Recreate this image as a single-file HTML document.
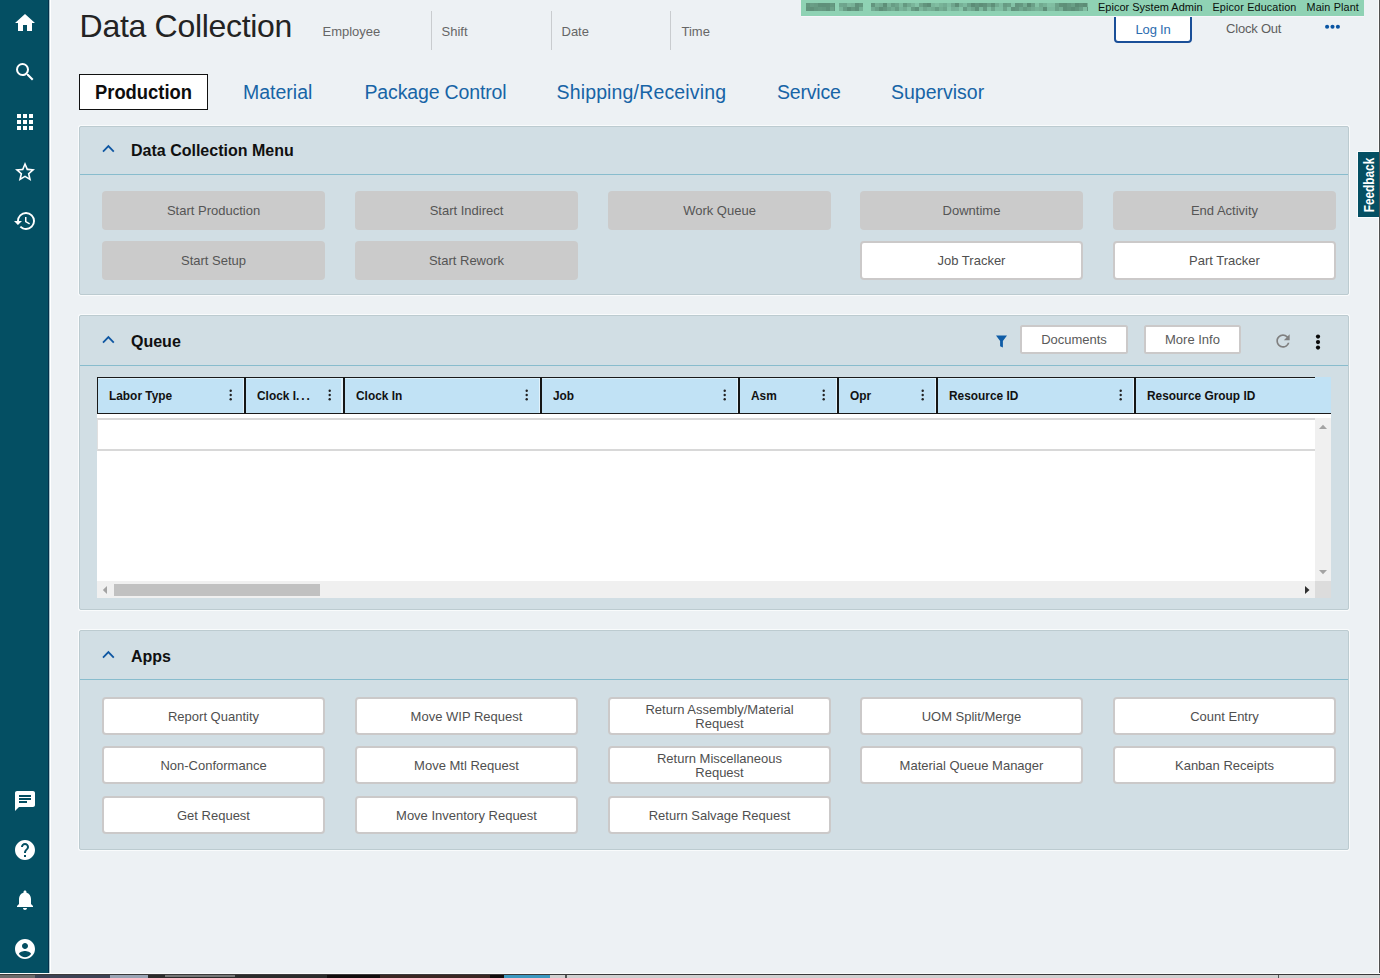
<!DOCTYPE html>
<html><head><meta charset="utf-8">
<style>
*{box-sizing:border-box;margin:0;padding:0}
html,body{width:1380px;height:978px;overflow:hidden;background:#edf1f4;font-family:"Liberation Sans",sans-serif;position:relative}
.a{position:absolute;white-space:nowrap;line-height:1}
#side{position:absolute;left:0;top:0;width:48px;height:973px;background:#044f63}
#sideline{position:absolute;left:48px;top:0;width:3px;height:973px;background:linear-gradient(90deg,#03314a 0,#03314a 1px,#a9c4cc 1px,#a9c4cc 2px,#fff 2px)}
.ico{position:absolute;left:13px;width:24px;height:24px;fill:#fff}
.hdrlbl{font-size:13px;color:#666}
.div{position:absolute;top:11px;width:1px;height:39px;background:#c9cccf}
.tab{font-size:19.5px;color:#1764a6}
.panel{position:absolute;left:79px;width:1270px;background:#d1dee4;border:1px solid #bccbd0;border-radius:2px;box-shadow:0 0 0 1px #f9fbfc}
.phl{position:absolute;left:0;width:100%;height:1px;background:#88bccd}
.ptitle{font-size:16px;font-weight:bold;color:#101010}
.chev{position:absolute;width:14px;height:9px}
.btn{position:absolute;width:223px;height:39px;border-radius:4px;font-size:13px;color:#555;display:flex;align-items:center;justify-content:center;text-align:center;line-height:13.5px;padding-top:1px}
.dis{background:#cbcbcb}
.wht{background:#fff;border:2px solid #cbc9c9;border-radius:4px;color:#4f4f4f}
</style></head><body>
<div id="side"></div><div id="sideline"></div>
<svg class="ico" style="top:11px" viewBox="0 0 24 24"><path d="M10 20v-6h4v6h5v-8h3L12 3 2 12h3v8z"/></svg>
<svg class="ico" style="top:60px" viewBox="0 0 24 24"><path d="M15.5 14h-.79l-.28-.27A6.471 6.471 0 0016 9.5 6.5 6.5 0 109.5 16c1.61 0 3.090-.59 4.23-1.57l.27.28v.79l5 4.99L20.49 19l-4.99-5zm-6 0C7.01 14 5 11.99 5 9.5S7.01 5 9.5 5 14 7.01 14 9.5 11.99 14 9.5 14z"/></svg>
<svg class="ico" style="top:110px" viewBox="0 0 24 24"><path d="M4 8h4V4H4v4zm6 12h4v-4h-4v4zm-6 0h4v-4H4v4zm0-6h4v-4H4v4zm6 0h4v-4h-4v4zm6-10v4h4V4h-4zm-6 4h4V4h-4v4zm6 6h4v-4h-4v4zm0 6h4v-4h-4v4z"/></svg>
<svg class="ico" style="top:159.5px" viewBox="0 0 24 24"><path d="M22 9.24l-7.19-.62L12 2 9.19 8.63 2 9.24l5.46 4.73L5.82 21 12 17.27 18.18 21l-1.63-7.03L22 9.24zM12 15.4l-3.76 2.27 1-4.28-3.32-2.88 4.38-.38L12 6.1l1.71 4.04 4.38.38-3.32 2.88 1 4.28L12 15.4z"/></svg>
<svg class="ico" style="top:209px" viewBox="0 0 24 24"><path d="M13 3a9 9 0 00-9 9H1l3.89 3.89.07.14L9 12H6c0-3.87 3.13-7 7-7s7 3.13 7 7-3.13 7-7 7c-1.93 0-3.68-.79-4.94-2.06l-1.42 1.42A8.954 8.954 0 0013 21a9 9 0 000-18zm-1 5v5l4.28 2.54.72-1.21-3.5-2.08V8H12z"/></svg>
<svg class="ico" style="top:789px" viewBox="0 0 24 24"><path d="M20 2H4c-1.1 0-1.99.9-1.99 2L2 22l4-4h14c1.1 0 2-.9 2-2V4c0-1.1-.9-2-2-2zM6 9h12v2H6V9zm8 5H6v-2h8v2zm4-6H6V6h12v2z"/></svg>
<svg class="ico" style="top:838px" viewBox="0 0 24 24"><path d="M12 2C6.48 2 2 6.48 2 12s4.48 10 10 10 10-4.48 10-10S17.52 2 12 2zm1 17h-2v-2h2v2zm2.07-7.75l-.9.92C13.45 12.9 13 13.5 13 15h-2v-.5c0-1.1.45-2.1 1.17-2.83l1.24-1.26c.37-.36.59-.86.59-1.41 0-1.1-.9-2-2-2s-2 .9-2 2H8c0-2.21 1.79-4 4-4s4 1.79 4 4c0 .88-.36 1.680-.93 2.25z"/></svg>
<svg class="ico" style="top:888px" viewBox="0 0 24 24"><path d="M12 22c1.1 0 2-.9 2-2h-4c0 1.1.89 2 2 2zm6-6v-5c0-3.07-1.64-5.64-4.5-6.32V4c0-.83-.67-1.5-1.5-1.5s-1.5.67-1.5 1.5v.68C7.63 5.36 6 7.92 6 11v5l-2 2v1h16v-1l-2-2z"/></svg>
<svg class="ico" style="top:937px" viewBox="0 0 24 24"><path d="M12 2C6.48 2 2 6.48 2 12s4.48 10 10 10 10-4.48 10-10S17.52 2 12 2zm0 4c1.66 0 3 1.34 3 3s-1.34 3-3 3-3-1.34-3-3 1.34-3 3-3zm0 14.2c-2.5 0-4.71-1.28-6-3.22.03-1.99 4-3.08 6-3.08 1.99 0 5.97 1.09 6 3.08-1.29 1.94-3.5 3.22-6 3.22z"/></svg>

<div class="a" style="left:79.6px;top:10.2px;font-size:32px;color:#232323;letter-spacing:-0.3px">Data Collection</div>
<div class="a hdrlbl" style="left:322.5px;top:25px">Employee</div>
<div class="div" style="left:431px"></div>
<div class="a hdrlbl" style="left:441.5px;top:25px">Shift</div>
<div class="div" style="left:551px"></div>
<div class="a hdrlbl" style="left:561.5px;top:25px">Date</div>
<div class="div" style="left:670px"></div>
<div class="a hdrlbl" style="left:681.5px;top:25px">Time</div>
<div style="position:absolute;left:1114px;top:8px;width:78px;height:35px;border:2px solid #1a4f98;border-radius:4px;background:#fff"></div>
<div class="a" style="left:1135.6px;top:22.7px;font-size:13px;color:#2c6cb0;letter-spacing:-0.2px">Log In</div>
<div class="a" style="left:1226px;top:22px;font-size:13px;color:#5e5e5e;letter-spacing:-0.2px">Clock Out</div>
<svg style="position:absolute;left:1324px;top:22px" width="18" height="8" viewBox="0 0 18 8"><circle cx="3.1" cy="4.7" r="2.05" fill="#0a55a3"/><circle cx="8.5" cy="4.7" r="2.05" fill="#0a55a3"/><circle cx="13.9" cy="4.7" r="2.05" fill="#0a55a3"/></svg>
<div style="position:absolute;left:801px;top:0;width:563px;height:16px;background:#8fd2b4;border-bottom:0px"></div>
<div style="position:absolute;left:801px;top:16px;width:563px;height:1px;background:#f8f5fb"></div>
<div class="a" style="left:1098px;top:2px;font-size:11px;color:#0a0f0c">Epicor System Admin</div>
<div class="a" style="left:1212.5px;top:2px;font-size:10.8px;color:#0a0f0c;letter-spacing:0.15px">Epicor Education</div>
<div class="a" style="left:1306.5px;top:2px;font-size:10.8px;color:#0a0f0c;letter-spacing:0.15px">Main Plant</div>

<div style="position:absolute;left:79px;top:74px;width:129px;height:36px;border:1.5px solid #111;background:#fff"></div>
<div class="a" style="left:95.4px;top:82.3px;font-size:20.5px;font-weight:bold;color:#0d0d0d;transform:scaleX(0.896);transform-origin:0 0">Production</div>
<div class="a tab" style="left:243px;top:82.7px">Material</div>
<div class="a tab" style="left:364.5px;top:82.7px;letter-spacing:-0.15px">Package Control</div>
<div class="a tab" style="left:556.5px;top:82.7px;letter-spacing:0.15px">Shipping/Receiving</div>
<div class="a tab" style="left:777px;top:82.7px;letter-spacing:-0.2px">Service</div>
<div class="a tab" style="left:891px;top:82.7px">Supervisor</div>

<div class="panel" style="top:126px;height:169px"><div class="phl" style="top:47px"></div><svg class="chev" style="left:22px;top:17px" viewBox="0 0 14 9"><path d="M1 7.6L6.4 2.1l5.4 5.5" fill="none" stroke="#0f57a2" stroke-width="1.8"/></svg><div class="a ptitle" style="left:51px;top:16px">Data Collection Menu</div><div class="btn dis" style="left:22px;top:64px;height:39px">Start Production</div><div class="btn dis" style="left:275px;top:64px;height:39px">Start Indirect</div><div class="btn dis" style="left:528px;top:64px;height:39px">Work Queue</div><div class="btn dis" style="left:780px;top:64px;height:39px">Downtime</div><div class="btn dis" style="left:1033px;top:64px;height:39px">End Activity</div><div class="btn dis" style="left:22px;top:114px;height:39px">Start Setup</div><div class="btn dis" style="left:275px;top:114px;height:39px">Start Rework</div><div class="btn wht" style="left:780px;top:113.5px;height:39px">Job Tracker</div><div class="btn wht" style="left:1033px;top:113.5px;height:39px">Part Tracker</div></div>
<div class="panel" style="top:315px;height:295px"><div class="phl" style="top:49px"></div><svg class="chev" style="left:22px;top:19px" viewBox="0 0 14 9"><path d="M1 7.6L6.4 2.1l5.4 5.5" fill="none" stroke="#0f57a2" stroke-width="1.8"/></svg><div class="a ptitle" style="left:51px;top:18px">Queue</div><svg style="position:absolute;left:916px;top:18.5px" width="11" height="13" viewBox="0 0 11 13"><path d="M0 0.5h11L6.9 6V12.5L4.1 11.3V6z" fill="#0f5ca6"/></svg><div class="wht" style="position:absolute;left:940px;top:9px;width:108px;height:29px;border:2px solid #cbc9c9;border-radius:2.5px;font-size:13px;color:#5a5a5a;display:flex;align-items:center;justify-content:center">Documents</div><div class="wht" style="position:absolute;left:1064px;top:9px;width:97px;height:29px;border:2px solid #cbc9c9;border-radius:2.5px;font-size:13px;color:#5a5a5a;display:flex;align-items:center;justify-content:center">More Info</div><svg style="position:absolute;left:1193px;top:14.8px" width="20" height="20" viewBox="0 0 24 24"><path d="M17.65 6.35A7.958 7.958 0 0012 4c-4.42 0-7.99 3.58-7.99 8s3.57 8 7.99 8c3.73 0 6.84-2.55 7.73-6h-2.08A5.99 5.99 0 0112 18c-3.31 0-6-2.69-6-6s2.69-6 6-6c1.66 0 3.14.69 4.22 1.78L13 11h7V4l-2.35 2.35z" fill="#808080"/></svg><svg style="position:absolute;left:1235px;top:18px" width="6" height="17" viewBox="0 0 6 17"><circle cx="3" cy="2.6" r="2.1" fill="#0a0a0a"/><circle cx="3" cy="8.1" r="2.1" fill="#0a0a0a"/><circle cx="3" cy="13.6" r="2.1" fill="#0a0a0a"/></svg><div style="position:absolute;left:17px;top:61px;width:1234px;height:221px;background:#fff;overflow:hidden"><div style="position:absolute;left:0;top:0;width:1234px;height:37px;background:#c1e2f5"></div><div style="position:absolute;left:0;top:0;width:1218px;height:1px;background:#1a1a1a"></div><div style="position:absolute;left:0;top:1px;width:1218px;height:1px;background:#dcf0fa"></div><div style="position:absolute;left:0;top:36px;width:1234px;height:1px;background:#1a1a1a"></div><div style="position:absolute;left:0px;top:0;width:1px;height:37px;background:#1a1a1a"></div><div class="a" style="left:12px;top:12px;font-size:13.5px;font-weight:bold;color:#111;transform:scaleX(0.88);transform-origin:0 0">Labor Type</div><svg style="position:absolute;left:131px;top:12px" width="4" height="12" viewBox="0 0 4 12"><circle cx="2.7" cy="1.7" r="1.2" fill="#222"/><circle cx="2.7" cy="6" r="1.2" fill="#222"/><circle cx="2.7" cy="10.3" r="1.2" fill="#222"/></svg><div style="position:absolute;left:145.5px;top:1px;width:1.5px;height:35px;background:#e2f2fb"></div><div style="position:absolute;left:147.0px;top:0;width:2px;height:37px;background:#151515"></div><div class="a" style="left:160px;top:12px;font-size:13.5px;font-weight:bold;color:#111;transform:scaleX(0.88);transform-origin:0 0">Clock I<span style="letter-spacing:2.2px">..</span>.</div><svg style="position:absolute;left:229.5px;top:12px" width="4" height="12" viewBox="0 0 4 12"><circle cx="2.7" cy="1.7" r="1.2" fill="#222"/><circle cx="2.7" cy="6" r="1.2" fill="#222"/><circle cx="2.7" cy="10.3" r="1.2" fill="#222"/></svg><div style="position:absolute;left:244.0px;top:1px;width:1.5px;height:35px;background:#e2f2fb"></div><div style="position:absolute;left:245.5px;top:0;width:2px;height:37px;background:#151515"></div><div class="a" style="left:258.5px;top:12px;font-size:13.5px;font-weight:bold;color:#111;transform:scaleX(0.88);transform-origin:0 0">Clock In</div><svg style="position:absolute;left:427px;top:12px" width="4" height="12" viewBox="0 0 4 12"><circle cx="2.7" cy="1.7" r="1.2" fill="#222"/><circle cx="2.7" cy="6" r="1.2" fill="#222"/><circle cx="2.7" cy="10.3" r="1.2" fill="#222"/></svg><div style="position:absolute;left:441.5px;top:1px;width:1.5px;height:35px;background:#e2f2fb"></div><div style="position:absolute;left:443.0px;top:0;width:2px;height:37px;background:#151515"></div><div class="a" style="left:456px;top:12px;font-size:13.5px;font-weight:bold;color:#111;transform:scaleX(0.88);transform-origin:0 0">Job</div><svg style="position:absolute;left:625px;top:12px" width="4" height="12" viewBox="0 0 4 12"><circle cx="2.7" cy="1.7" r="1.2" fill="#222"/><circle cx="2.7" cy="6" r="1.2" fill="#222"/><circle cx="2.7" cy="10.3" r="1.2" fill="#222"/></svg><div style="position:absolute;left:639.5px;top:1px;width:1.5px;height:35px;background:#e2f2fb"></div><div style="position:absolute;left:641.0px;top:0;width:2px;height:37px;background:#151515"></div><div class="a" style="left:654px;top:12px;font-size:13.5px;font-weight:bold;color:#111;transform:scaleX(0.88);transform-origin:0 0">Asm</div><svg style="position:absolute;left:724px;top:12px" width="4" height="12" viewBox="0 0 4 12"><circle cx="2.7" cy="1.7" r="1.2" fill="#222"/><circle cx="2.7" cy="6" r="1.2" fill="#222"/><circle cx="2.7" cy="10.3" r="1.2" fill="#222"/></svg><div style="position:absolute;left:738.5px;top:1px;width:1.5px;height:35px;background:#e2f2fb"></div><div style="position:absolute;left:740.0px;top:0;width:2px;height:37px;background:#151515"></div><div class="a" style="left:753px;top:12px;font-size:13.5px;font-weight:bold;color:#111;transform:scaleX(0.88);transform-origin:0 0">Opr</div><svg style="position:absolute;left:823px;top:12px" width="4" height="12" viewBox="0 0 4 12"><circle cx="2.7" cy="1.7" r="1.2" fill="#222"/><circle cx="2.7" cy="6" r="1.2" fill="#222"/><circle cx="2.7" cy="10.3" r="1.2" fill="#222"/></svg><div style="position:absolute;left:837.5px;top:1px;width:1.5px;height:35px;background:#e2f2fb"></div><div style="position:absolute;left:839.0px;top:0;width:2px;height:37px;background:#151515"></div><div class="a" style="left:852px;top:12px;font-size:13.5px;font-weight:bold;color:#111;transform:scaleX(0.88);transform-origin:0 0">Resource ID</div><svg style="position:absolute;left:1021px;top:12px" width="4" height="12" viewBox="0 0 4 12"><circle cx="2.7" cy="1.7" r="1.2" fill="#222"/><circle cx="2.7" cy="6" r="1.2" fill="#222"/><circle cx="2.7" cy="10.3" r="1.2" fill="#222"/></svg><div style="position:absolute;left:1035.5px;top:1px;width:1.5px;height:35px;background:#e2f2fb"></div><div style="position:absolute;left:1037.0px;top:0;width:2px;height:37px;background:#151515"></div><div class="a" style="left:1050px;top:12px;font-size:13.5px;font-weight:bold;color:#111;transform:scaleX(0.88);transform-origin:0 0">Resource Group ID</div><div style="position:absolute;left:0;top:41px;width:1218px;height:33px;border-top:2px solid #d8d8d8;border-bottom:2px solid #d8d8d8;border-left:1px solid #e0e0e0"></div><div style="position:absolute;left:1218px;top:41px;width:16px;height:163px;background:#f0f0f0"></div><svg style="position:absolute;left:1222px;top:47px" width="8" height="5" viewBox="0 0 8 5"><path d="M0 5L4 0.8 8 5z" fill="#a3a3a3"/></svg><svg style="position:absolute;left:1222px;top:193px" width="8" height="5" viewBox="0 0 8 5"><path d="M0 0L4 4.2 8 0z" fill="#a3a3a3"/></svg><div style="position:absolute;left:0;top:204px;width:1218px;height:17px;background:#f0f0f0"></div><div style="position:absolute;left:17px;top:206.5px;width:206px;height:12.5px;background:#c1c1c1"></div><svg style="position:absolute;left:5px;top:208.5px" width="5" height="8" viewBox="0 0 5 8"><path d="M5 0L0.8 4 5 8z" fill="#a3a3a3"/></svg><svg style="position:absolute;left:1208px;top:209px" width="5" height="8" viewBox="0 0 5 8"><path d="M0 0L4.5 4 0 8z" fill="#303030"/></svg><div style="position:absolute;left:1218px;top:204px;width:16px;height:18px;background:#dcdcdc"></div></div></div>
<div class="panel" style="top:630px;height:220px"><div class="phl" style="top:48px"></div><svg class="chev" style="left:22px;top:19px" viewBox="0 0 14 9"><path d="M1 7.6L6.4 2.1l5.4 5.5" fill="none" stroke="#0f57a2" stroke-width="1.8"/></svg><div class="a ptitle" style="left:51px;top:18px">Apps</div><div class="btn wht" style="left:22px;top:66px;height:38px">Report Quantity</div><div class="btn wht" style="left:275px;top:66px;height:38px">Move WIP Request</div><div class="btn wht" style="left:528px;top:66px;height:38px">Return Assembly/Material<br>Request</div><div class="btn wht" style="left:780px;top:66px;height:38px">UOM Split/Merge</div><div class="btn wht" style="left:1033px;top:66px;height:38px">Count Entry</div><div class="btn wht" style="left:22px;top:115px;height:38px">Non-Conformance</div><div class="btn wht" style="left:275px;top:115px;height:38px">Move Mtl Request</div><div class="btn wht" style="left:528px;top:115px;height:38px">Return Miscellaneous<br>Request</div><div class="btn wht" style="left:780px;top:115px;height:38px">Material Queue Manager</div><div class="btn wht" style="left:1033px;top:115px;height:38px">Kanban Receipts</div><div class="btn wht" style="left:22px;top:165px;height:38px">Get Request</div><div class="btn wht" style="left:275px;top:165px;height:38px">Move Inventory Request</div><div class="btn wht" style="left:528px;top:165px;height:38px">Return Salvage Request</div></div>

<svg style="position:absolute;left:801px;top:0" width="300" height="15" viewBox="0 0 300 15"><rect x="5" y="3" width="4" height="4" fill="#64977f"/><rect x="5" y="7" width="4" height="4" fill="#61937c"/><rect x="9" y="3" width="4" height="4" fill="#699e86"/><rect x="9" y="7" width="4" height="4" fill="#60917a"/><rect x="13" y="3" width="4" height="4" fill="#679b83"/><rect x="13" y="7" width="4" height="4" fill="#649880"/><rect x="17" y="3" width="4" height="4" fill="#5f917a"/><rect x="17" y="7" width="4" height="4" fill="#679b83"/><rect x="21" y="3" width="4" height="4" fill="#5f907a"/><rect x="21" y="7" width="4" height="4" fill="#659981"/><rect x="25" y="3" width="4" height="4" fill="#60917a"/><rect x="25" y="7" width="4" height="4" fill="#60917b"/><rect x="29" y="3" width="4" height="4" fill="#659981"/><rect x="29" y="7" width="4" height="4" fill="#6ca289"/><rect x="33" y="3" width="1" height="4" fill="#60927b"/><rect x="33" y="7" width="1" height="4" fill="#62947d"/><rect x="38" y="3" width="4" height="4" fill="#6fa78e"/><rect x="38" y="7" width="4" height="4" fill="#7ab59a"/><rect x="42" y="3" width="4" height="4" fill="#6ea48c"/><rect x="42" y="7" width="4" height="4" fill="#689d85"/><rect x="46" y="3" width="4" height="4" fill="#7bb69b"/><rect x="46" y="7" width="4" height="4" fill="#5d8d77"/><rect x="50" y="3" width="4" height="4" fill="#77b197"/><rect x="50" y="7" width="4" height="4" fill="#659880"/><rect x="54" y="3" width="4" height="4" fill="#60917b"/><rect x="54" y="7" width="4" height="4" fill="#5f907a"/><rect x="58" y="3" width="4" height="4" fill="#659981"/><rect x="58" y="7" width="4" height="4" fill="#75af95"/><rect x="70" y="3" width="4" height="4" fill="#63957e"/><rect x="70" y="7" width="4" height="4" fill="#73ac93"/><rect x="74" y="3" width="4" height="4" fill="#76b095"/><rect x="74" y="7" width="4" height="4" fill="#6ba088"/><rect x="78" y="3" width="4" height="4" fill="#72aa91"/><rect x="78" y="7" width="4" height="4" fill="#5e8f78"/><rect x="82" y="3" width="4" height="4" fill="#5e8f78"/><rect x="82" y="7" width="4" height="4" fill="#649780"/><rect x="86" y="3" width="4" height="4" fill="#78b298"/><rect x="86" y="7" width="4" height="4" fill="#6da48b"/><rect x="90" y="3" width="4" height="4" fill="#689d85"/><rect x="90" y="7" width="4" height="4" fill="#74ad93"/><rect x="94" y="3" width="4" height="4" fill="#6ea58c"/><rect x="94" y="7" width="4" height="4" fill="#689c84"/><rect x="98" y="3" width="4" height="4" fill="#7cb99d"/><rect x="98" y="7" width="4" height="4" fill="#78b399"/><rect x="102" y="3" width="4" height="4" fill="#659981"/><rect x="102" y="7" width="4" height="4" fill="#73ac92"/><rect x="106" y="3" width="4" height="4" fill="#71a990"/><rect x="106" y="7" width="4" height="4" fill="#80bda1"/><rect x="110" y="3" width="4" height="4" fill="#7ab59a"/><rect x="110" y="7" width="4" height="4" fill="#679c84"/><rect x="114" y="3" width="4" height="4" fill="#84c3a7"/><rect x="114" y="7" width="4" height="4" fill="#60927b"/><rect x="118" y="3" width="4" height="4" fill="#6da38a"/><rect x="118" y="7" width="4" height="4" fill="#7bb69b"/><rect x="122" y="3" width="4" height="4" fill="#62947d"/><rect x="122" y="7" width="4" height="4" fill="#70a78e"/><rect x="126" y="3" width="4" height="4" fill="#5d8d77"/><rect x="126" y="7" width="4" height="4" fill="#77b197"/><rect x="130" y="3" width="4" height="4" fill="#7bb79c"/><rect x="130" y="7" width="4" height="4" fill="#73ac92"/><rect x="134" y="3" width="4" height="4" fill="#80bda1"/><rect x="134" y="7" width="4" height="4" fill="#689d85"/><rect x="138" y="3" width="4" height="4" fill="#78b398"/><rect x="138" y="7" width="4" height="4" fill="#74ad93"/><rect x="142" y="3" width="4" height="4" fill="#73ac93"/><rect x="142" y="7" width="4" height="4" fill="#6ea58c"/><rect x="146" y="3" width="4" height="4" fill="#7ebba0"/><rect x="146" y="7" width="4" height="4" fill="#83c1a5"/><rect x="150" y="3" width="4" height="4" fill="#6fa68d"/><rect x="150" y="7" width="4" height="4" fill="#77b197"/><rect x="154" y="3" width="4" height="4" fill="#5e8f78"/><rect x="154" y="7" width="4" height="4" fill="#78b399"/><rect x="158" y="3" width="4" height="4" fill="#76b096"/><rect x="158" y="7" width="4" height="4" fill="#85c4a7"/><rect x="162" y="3" width="4" height="4" fill="#7dba9f"/><rect x="162" y="7" width="4" height="4" fill="#679b84"/><rect x="166" y="3" width="4" height="4" fill="#6ba189"/><rect x="166" y="7" width="4" height="4" fill="#77b197"/><rect x="170" y="3" width="4" height="4" fill="#5c8c76"/><rect x="170" y="7" width="4" height="4" fill="#6fa68d"/><rect x="174" y="3" width="4" height="4" fill="#62957e"/><rect x="174" y="7" width="4" height="4" fill="#60927b"/><rect x="178" y="3" width="4" height="4" fill="#5e8e78"/><rect x="178" y="7" width="4" height="4" fill="#7bb79c"/><rect x="182" y="3" width="4" height="4" fill="#61927c"/><rect x="182" y="7" width="4" height="4" fill="#669982"/><rect x="186" y="3" width="4" height="4" fill="#6ca189"/><rect x="186" y="7" width="4" height="4" fill="#80bda1"/><rect x="190" y="3" width="4" height="4" fill="#5f9079"/><rect x="190" y="7" width="4" height="4" fill="#6ea58c"/><rect x="194" y="3" width="4" height="4" fill="#72ab91"/><rect x="194" y="7" width="4" height="4" fill="#80bea2"/><rect x="198" y="3" width="4" height="4" fill="#7dba9f"/><rect x="198" y="7" width="4" height="4" fill="#7fbda1"/><rect x="202" y="3" width="4" height="4" fill="#679b83"/><rect x="202" y="7" width="4" height="4" fill="#6da38a"/><rect x="206" y="3" width="4" height="4" fill="#6aa087"/><rect x="206" y="7" width="4" height="4" fill="#80bea2"/><rect x="210" y="3" width="4" height="4" fill="#83c2a6"/><rect x="210" y="7" width="4" height="4" fill="#62947d"/><rect x="214" y="3" width="4" height="4" fill="#63957e"/><rect x="214" y="7" width="4" height="4" fill="#659881"/><rect x="218" y="3" width="4" height="4" fill="#659881"/><rect x="218" y="7" width="4" height="4" fill="#6fa78e"/><rect x="222" y="3" width="4" height="4" fill="#74ad93"/><rect x="222" y="7" width="4" height="4" fill="#669a82"/><rect x="226" y="3" width="4" height="4" fill="#5b8b75"/><rect x="226" y="7" width="4" height="4" fill="#6da38a"/><rect x="230" y="3" width="4" height="4" fill="#6ba088"/><rect x="230" y="7" width="4" height="4" fill="#73ab92"/><rect x="234" y="3" width="4" height="4" fill="#83c2a5"/><rect x="234" y="7" width="4" height="4" fill="#78b398"/><rect x="238" y="3" width="4" height="4" fill="#71a98f"/><rect x="238" y="7" width="4" height="4" fill="#75ae94"/><rect x="242" y="3" width="4" height="4" fill="#77b297"/><rect x="242" y="7" width="4" height="4" fill="#5e8e78"/><rect x="246" y="3" width="4" height="4" fill="#81bfa3"/><rect x="246" y="7" width="4" height="4" fill="#7cb89d"/><rect x="250" y="3" width="4" height="4" fill="#80bda1"/><rect x="250" y="7" width="4" height="4" fill="#7cb99e"/><rect x="254" y="3" width="4" height="4" fill="#6ca289"/><rect x="254" y="7" width="4" height="4" fill="#6ca289"/><rect x="258" y="3" width="4" height="4" fill="#60917a"/><rect x="258" y="7" width="4" height="4" fill="#76af95"/><rect x="262" y="3" width="4" height="4" fill="#5e8f78"/><rect x="262" y="7" width="4" height="4" fill="#5e8f79"/><rect x="266" y="3" width="4" height="4" fill="#649780"/><rect x="266" y="7" width="4" height="4" fill="#62947d"/><rect x="270" y="3" width="4" height="4" fill="#699f86"/><rect x="270" y="7" width="4" height="4" fill="#5d8e78"/><rect x="274" y="3" width="4" height="4" fill="#5b8b75"/><rect x="274" y="7" width="4" height="4" fill="#62947d"/><rect x="278" y="3" width="4" height="4" fill="#60917a"/><rect x="278" y="7" width="4" height="4" fill="#6aa088"/><rect x="282" y="3" width="4" height="4" fill="#5c8d76"/><rect x="282" y="7" width="4" height="4" fill="#80bda1"/><rect x="286" y="3" width="1" height="4" fill="#75ae94"/><rect x="286" y="7" width="1" height="4" fill="#61947d"/></svg>
<div style="position:absolute;left:1378px;top:0;width:1px;height:974px;background:#fbfbfb"></div>
<div style="position:absolute;left:1379px;top:0;width:1px;height:974px;background:#505050"></div>
<div style="position:absolute;left:1357px;top:151px;width:22px;height:67px;background:#fafcfd"></div><div style="position:absolute;left:1358px;top:152px;width:21px;height:65px;background:#044f63"></div><div style="position:absolute;left:1379px;top:0;width:1px;height:974px;background:#505050"></div>
<div class="a" style="left:1369.3px;top:184.6px;font-size:14px;font-weight:bold;color:#fff;transform:translate(-50%,-50%) rotate(-90deg) scaleX(0.843);transform-origin:center">Feedback</div>
<div style="position:absolute;left:0;top:973px;width:1380px;height:1px;background:#fafafa"></div>
<div style="position:absolute;left:0;top:974px;width:1380px;height:4px;background:#d0d0d0"></div>
<div style="position:absolute;left:0;top:974px;width:35px;height:4px;background:#6a6a6a"></div>
<div style="position:absolute;left:35px;top:974px;width:75px;height:4px;background:#3c4254"></div>
<div style="position:absolute;left:110px;top:974px;width:38px;height:4px;background:#9aa4b4"></div>
<div style="position:absolute;left:148px;top:974px;width:179px;height:4px;background:#2b2b2b"></div>
<div style="position:absolute;left:165px;top:975px;width:70px;height:2px;background:#777"></div>
<div style="position:absolute;left:327px;top:974px;width:177px;height:4px;background:#120d0d"></div>
<div style="position:absolute;left:380px;top:975px;width:110px;height:3px;background:#3a2622"></div>
<div style="position:absolute;left:504px;top:974px;width:46px;height:4px;background:#3b98c0"></div>
<div style="position:absolute;left:565px;top:974px;width:2px;height:4px;background:#555"></div>
<div style="position:absolute;left:1278px;top:974px;width:1px;height:4px;background:#555"></div>
<div style="position:absolute;left:0;top:974px;width:1380px;height:1px;background:#3a3a3a"></div>


</body></html>
